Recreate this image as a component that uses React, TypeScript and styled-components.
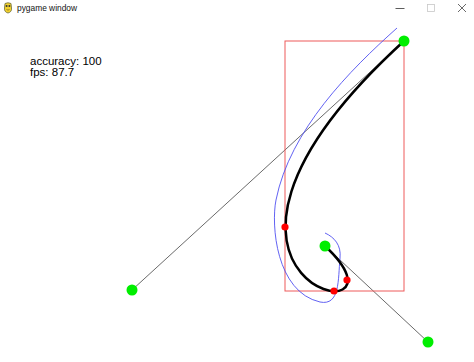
import React from "react";
import styled, { createGlobalStyle } from "styled-components";

const GlobalStyle = createGlobalStyle`
  html, body {
    margin: 0;
    padding: 0;
    background: #ffffff;
  }
`;

// window chrome
const Window = styled.div`
  width: 474px;
  height: 362px;
  display: flex;
  flex-direction: column;
  background: #fff;
  overflow: hidden;
`;

const TitleBar = styled.div`
  height: 20px;
  display: flex;
  align-items: center;
  padding: 0 7px 4px 3px;
  box-sizing: border-box;
`;

const TitleText = styled.span`
  margin-left: 4px;
  font-family: "Liberation Sans", Arial, sans-serif;
  font-size: 8.4px;
  color: #111;
  flex: 1;
`;

const Controls = styled.div`
  display: flex;
  align-items: center;
  gap: 21px;
`;

const ControlIcon = styled.svg`
  display: block;
  width: 10px;
  height: 10px;
`;

const Canvas = styled.div`
  flex: 1;
  display: grid;
`;

const Drawing = styled.svg`
  grid-area: 1 / 1;
  display: block;
`;

const Stats = styled.div`
  grid-area: 1 / 1;
  align-self: start;
  padding: 36px 0 0 30px;
  font-family: "Liberation Sans", Arial, sans-serif;
  font-size: 11.5px;
  line-height: 10.5px;
  color: #000;
`;

type Pt = [number, number];

// bezier that is drawn, and the extreme points / bbox found on it
const P0: Pt = [404, 41];
const P1: Pt = [132, 290];
const P2: Pt = [428, 342];
const P3: Pt = [325, 246];

const extremes: Pt[] = [
  [285, 227],
  [334, 291],
  [347, 280],
];

// the blue approximation
const approxPath =
  "M397 28 C350 70 290 130 276 200" +
  " C271 225 276 292 320 302" +
  " C340 306 338 280 340 258" +
  " C341.5 245 334 237 325 233";

const PygameIcon = () => (
  <svg width="10" height="12" viewBox="0 0 10 12">
    <path
      d="M2 1.5 Q5 0 8 1.5 L8.5 6 Q9 10 5 11 Q1 10 1.5 6 Z"
      fill="#f2d22e"
      stroke="#6b6b3a"
      strokeWidth="0.8"
    />
    <circle cx="3.6" cy="4" r="1" fill="#333" />
    <circle cx="6.4" cy="4" r="1" fill="#333" />
    <path d="M3.5 7.5 Q5 8.8 6.5 7.5" fill="none" stroke="#8a6d1a" strokeWidth="0.8" />
  </svg>
);

const App: React.FC = () => {
  return (
    <>
      <GlobalStyle />
      <Window>
        <TitleBar>
          <PygameIcon />
          <TitleText>pygame window</TitleText>
          <Controls>
            <ControlIcon viewBox="0 0 10 10">
              <line x1="0.5" y1="5.5" x2="9.5" y2="5.5" stroke="#333" strokeWidth="0.8" />
            </ControlIcon>
            <ControlIcon viewBox="0 0 10 10">
              <rect x="1.5" y="1.5" width="7" height="7" fill="none" stroke="#c8c8c8" strokeWidth="0.8" />
            </ControlIcon>
            <ControlIcon viewBox="0 0 10 10">
              <path d="M1 1 L9 9 M9 1 L1 9" stroke="#444" strokeWidth="0.8" />
            </ControlIcon>
          </Controls>
        </TitleBar>
        <Canvas>
          <Drawing width="474" height="342" viewBox="0 20 474 342">
            <line x1={P0[0]} y1={P0[1]} x2={P1[0]} y2={P1[1]} stroke="#444" strokeWidth="0.8" />
            <line x1={P2[0]} y1={P2[1]} x2={P3[0]} y2={P3[1]} stroke="#444" strokeWidth="0.8" />
            <rect x="285" y="41" width="119" height="250" fill="none" stroke="#ee5a5a" strokeWidth="1" />
            <path d={approxPath} fill="none" stroke="#5050f0" strokeWidth="0.9" />
            <path
              d={`M${P0.join(" ")} C${P1.join(" ")} ${P2.join(" ")} ${P3.join(" ")}`}
              fill="none"
              stroke="#000"
              strokeWidth="2.5"
            />
            {[P0, P1, P2, P3].map((p, i) => (
              <circle key={i} cx={p[0]} cy={p[1]} r="5.5" fill="#00ee00" />
            ))}
            {extremes.map((p, i) => (
              <circle key={i} cx={p[0]} cy={p[1]} r="3.6" fill="#ff0000" />
            ))}
          </Drawing>
          <Stats>
            accuracy: 100
            <br />
            fps: 87.7
          </Stats>
        </Canvas>
      </Window>
    </>
  );
};

export default App;
